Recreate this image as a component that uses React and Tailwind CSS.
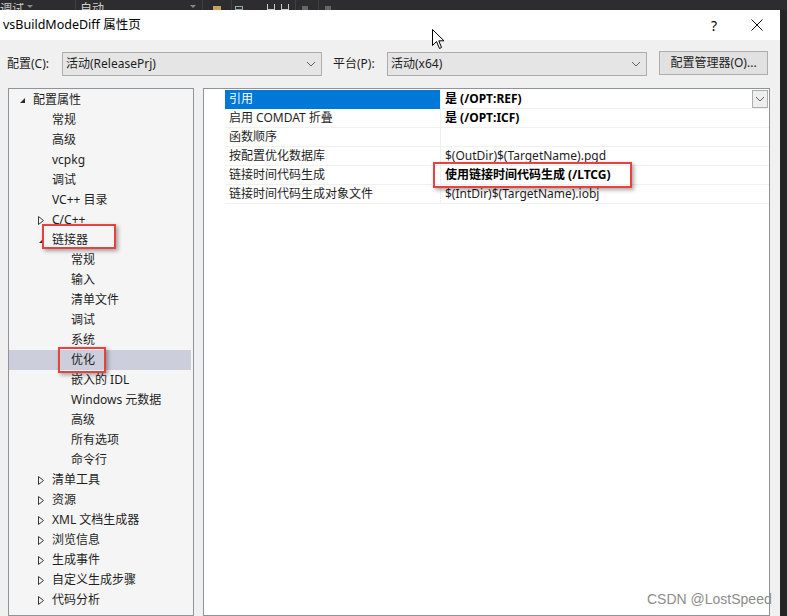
import React from 'react'

const tree = [
  { t: '配置属性', l: 0, exp: true },
  { t: '常规', l: 1 },
  { t: '高级', l: 1 },
  { t: 'vcpkg', l: 1 },
  { t: '调试', l: 1 },
  { t: 'VC++ 目录', l: 1 },
  { t: 'C/C++', l: 1, col: true },
  { t: '链接器', l: 1, exp: true },
  { t: '常规', l: 2 },
  { t: '输入', l: 2 },
  { t: '清单文件', l: 2 },
  { t: '调试', l: 2 },
  { t: '系统', l: 2 },
  { t: '优化', l: 2, sel: true },
  { t: '嵌入的 IDL', l: 2 },
  { t: 'Windows 元数据', l: 2 },
  { t: '高级', l: 2 },
  { t: '所有选项', l: 2 },
  { t: '命令行', l: 2 },
  { t: '清单工具', l: 1, col: true },
  { t: '资源', l: 1, col: true },
  { t: 'XML 文档生成器', l: 1, col: true },
  { t: '浏览信息', l: 1, col: true },
  { t: '生成事件', l: 1, col: true },
  { t: '自定义生成步骤', l: 1, col: true },
  { t: '代码分析', l: 1, col: true },
]

const indent = ['pl-[9px]', 'pl-[28px]', 'pl-[47px]']

const props = [
  { name: '引用', value: '是 (/OPT:REF)', bold: true, active: true },
  { name: '启用 COMDAT 折叠', value: '是 (/OPT:ICF)', bold: true },
  { name: '函数顺序', value: '' },
  { name: '按配置优化数据库', value: '$(OutDir)$(TargetName).pgd' },
  { name: '链接时间代码生成', value: '使用链接时间代码生成 (/LTCG)', bold: true },
  { name: '链接时间代码生成对象文件', value: '$(IntDir)$(TargetName).iobj' },
]

const Chevron = ({ className = '' }) => (
  <svg width="10" height="6" viewBox="0 0 10 6" className={className}>
    <path d="M1 1 L5 5 L9 1" fill="none" stroke="#606060" strokeWidth="1" />
  </svg>
)

const Arrow = ({ exp, col }) => (
  <span className="w-[8px] h-[8px] flex items-center justify-center shrink-0">
    {exp && (
      <svg width="8" height="8" viewBox="0 0 8 8">
        <polygon points="7,2 7,7 2,7" fill="#2b2b2b" />
      </svg>
    )}
    {col && (
      <svg width="8" height="9" viewBox="0 0 8 9">
        <polygon points="1.5,0.5 6.5,4.5 1.5,8.5" fill="none" stroke="#3a3a3a" strokeWidth="1" />
      </svg>
    )}
  </span>
)

const Select = ({ value }) => (
  <div className="w-[260px] h-[24px] bg-[#e5e5e5] border border-[#adadad] flex items-center justify-between pl-[3px] pr-[5px]">
    <span>{value}</span>
    <Chevron />
  </div>
)

const Tiny = () => (
  <svg width="6" height="4" viewBox="0 0 6 4" className="mb-[1px]">
    <polygon points="0,0 6,0 3,3" fill="#888" />
  </svg>
)

export default function App() {
  return (
    <div className="w-[787px] h-[616px] bg-[#252526] overflow-hidden relative text-[12px] text-[#1e1e1e] font-['Noto_Sans','Noto_Sans_CJK_SC',sans-serif]">
      {/* toolbar strip of the IDE behind the dialog */}
      <div className="h-[10px] bg-[#2d2d30] flex items-end overflow-hidden text-[#d0d0d0] text-[12px] leading-none">
        <span className="-mb-[5px] w-[24px] overflow-hidden whitespace-nowrap">调试器</span>
        <span className="ml-[3px]"><Tiny /></span>
        <span className="w-px h-[10px] bg-[#3f3f46] ml-[42px]" />
        <span className="-mb-[5px] ml-[4px] w-[110px] whitespace-nowrap">自动</span>
        <span><Tiny /></span>
        <span className="w-px h-[10px] bg-[#3f3f46] ml-[6px]" />
        <span className="w-[8px] h-[4px] bg-[#c8a25a] ml-[10px]" />
        <span className="w-px h-[10px] bg-[#3f3f46] ml-[10px]" />
        <span className="w-[8px] h-[4px] border border-[#9aa] ml-[3px]" />
        <span className="w-[8px] h-[6px] border-x border-b border-[#ccc] ml-[24px]" />
        <span className="w-[8px] h-[6px] border-x border-b border-[#ccc] ml-[6px]" />
        <span className="w-px h-[10px] bg-[#3f3f46] ml-[6px]" />
        <span className="w-[6px] h-[4px] bg-[#666] ml-[6px]" />
        <span className="w-px h-[10px] bg-[#3f3f46] ml-[10px]" />
        <span className="w-[6px] h-[4px] bg-[#666] ml-[6px]" />
      </div>

      <div className="flex">
        {/* dialog */}
        <div className="w-[780px] h-[606px] bg-[#f0f0f0] flex flex-col">
          {/* title bar */}
          <div className="h-[30px] bg-white flex items-center pl-[3px] pr-[17px]">
            <span className="text-[12.5px] text-black">vsBuildModeDiff 属性页</span>
            <span className="ml-auto text-[14px] text-black mr-[34px]">?</span>
            <svg width="12" height="12" viewBox="0 0 12 12">
              <path d="M0.5 0.5 L11.5 11.5 M11.5 0.5 L0.5 11.5" stroke="#111" strokeWidth="1" />
            </svg>
          </div>

          {/* configuration row */}
          <div className="flex items-center pt-[12px] pl-[7px]">
            <span className="w-[55px]">配置(C):</span>
            <Select value="活动(ReleasePrj)" />
            <span className="ml-[11px] w-[54px]">平台(P):</span>
            <Select value="活动(x64)" />
            <div className="ml-[12px] -mt-[2px] w-[109px] h-[24px] bg-[#e1e1e1] border border-[#adadad] flex items-center justify-center">
              配置管理器(O)...
            </div>
          </div>

          {/* panels */}
          <div className="flex pt-[12px] pl-[8px] flex-1 min-h-0">
            {/* tree */}
            <div className="w-[186px] bg-[#f5f5f5] border border-[#8f939c] pt-[1px] pr-[2px]">
              {tree.map((n, i) => (
                <div
                  key={i}
                  className={`h-[20px] flex items-center gap-[7px] ${indent[n.l]} ${n.sel ? 'bg-[#cccedb]' : ''}`}
                >
                  <Arrow exp={n.exp} col={n.col} />
                  <span className="whitespace-nowrap">{n.t}</span>
                </div>
              ))}
            </div>

            {/* property grid */}
            <div className="ml-[9px] w-[567px] bg-white border border-[#8f939c] pt-[1px]">
              {props.map((p, i) => (
                <div key={i} className="flex h-[19px]">
                  <div className="w-[21px] shrink-0" />
                  <div
                    className={`w-[215px] shrink-0 flex items-center pl-[4px] border-b ${
                      p.active ? 'bg-[#0078d7] text-white border-[#0078d7]' : 'border-[#f0f0f0]'
                    }`}
                  >
                    {p.name}
                  </div>
                  <div className="flex-1 flex items-center pl-[4px] border-b border-l border-[#f0f0f0]">
                    <span className={p.bold ? 'font-bold text-black' : ''}>{p.value}</span>
                    {p.active && (
                      <div className="ml-auto mr-[1px] w-[16px] h-[18px] border border-[#adadad] bg-[#eeeeee] flex items-center justify-center">
                        <Chevron />
                      </div>
                    )}
                  </div>
                </div>
              ))}
            </div>
          </div>
        </div>
      </div>

      {/* red annotation boxes */}
      <div className="absolute left-[42px] top-[224px] w-[74px] h-[25px] border-2 border-[#e8413f] shadow-[2px_2px_4px_rgba(0,0,0,0.35)]" />
      <div className="absolute left-[58px] top-[347px] w-[48px] h-[26px] border-2 border-[#e8413f] shadow-[2px_2px_4px_rgba(0,0,0,0.35)]" />
      <div className="absolute left-[433px] top-[162px] w-[199px] h-[26px] border-2 border-[#e8413f] shadow-[2px_2px_4px_rgba(0,0,0,0.35)]" />

      {/* mouse cursor */}
      <svg className="absolute left-[432px] top-[29px]" width="13" height="21" viewBox="0 0 13 21">
        <path d="M0.5 0.5 L0.5 16.5 L4.5 12.5 L7.5 19.5 L9.5 18.5 L6.8 11.8 L12 11.8 Z" fill="white" stroke="black" strokeWidth="1" />
      </svg>

      {/* watermark */}
      <div className="absolute left-[647px] top-[589px] text-[14px] text-[#8c8c8c] font-['Liberation_Sans',sans-serif]">
        CSDN @LostSpeed
      </div>
    </div>
  )
}
